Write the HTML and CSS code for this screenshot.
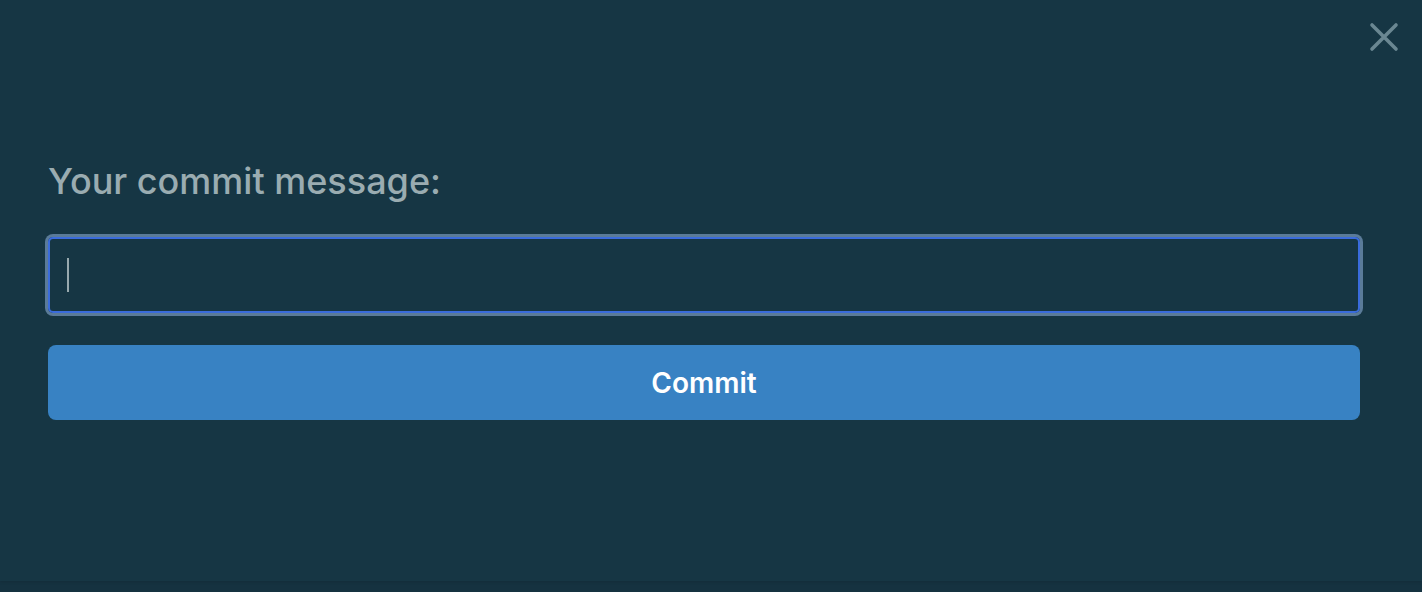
FILE: index.html
```html
<!DOCTYPE html>
<html>
<head>
<meta charset="utf-8">
<link rel="stylesheet" href="styles.css">
</head>
<body>
<div class="modal">
  <button class="close" aria-label="Close">
    <svg width="32" height="32" viewBox="0 0 32 32"><path d="M4 4 L28 28 M28 4 L4 28" stroke="#6a8792" stroke-width="3.6" stroke-linecap="round" fill="none"/></svg>
  </button>
  <form class="form">
    <label class="label" for="msg">Your commit message:</label>
    <div class="field"><span class="caret"></span></div>
    <button type="button" class="commit">Commit</button>
  </form>
</div>
</body>
</html>
```
FILE: styles.css
```css
html, body {
  margin: 0;
  padding: 0;
}
body {
  background: #153240;
  width: 1422px;
  height: 592px;
  overflow: hidden;
  font-family: Inter, "Noto Sans", sans-serif;
}
.modal {
  position: relative;
  height: 581px;
  background: #163644;
  box-shadow: 0 1px 3px rgba(0,0,0,0.12);
  box-sizing: border-box;
  padding: 159px 62px 0 48px;
}
.close {
  position: absolute;
  top: 21px;
  right: 22px;
  background: none;
  border: 0;
  padding: 0;
  width: 32px;
  height: 32px;
}
.form {
  display: flex;
  flex-direction: column;
}
.label {
  font-size: 36px;
  font-weight: 500;
  color: #9aacb1;
  line-height: 44px;
  margin-bottom: 34px;
}
.field {
  height: 76px;
  box-sizing: border-box;
  border: 2px solid #3a6cdc;
  border-radius: 5px;
  box-shadow: 0 0 0 3px #5a7b99;
  display: flex;
  align-items: center;
  padding-left: 17px;
}
.caret {
  width: 2px;
  height: 34px;
  background: #98a9ae;
}
.commit {
  margin-top: 32px;
  height: 75px;
  background: #3882c3;
  border: 0;
  border-radius: 8px;
  color: #ffffff;
  font-family: Inter, "Noto Sans", sans-serif;
  font-size: 28px;
  font-weight: 600;
}
```
